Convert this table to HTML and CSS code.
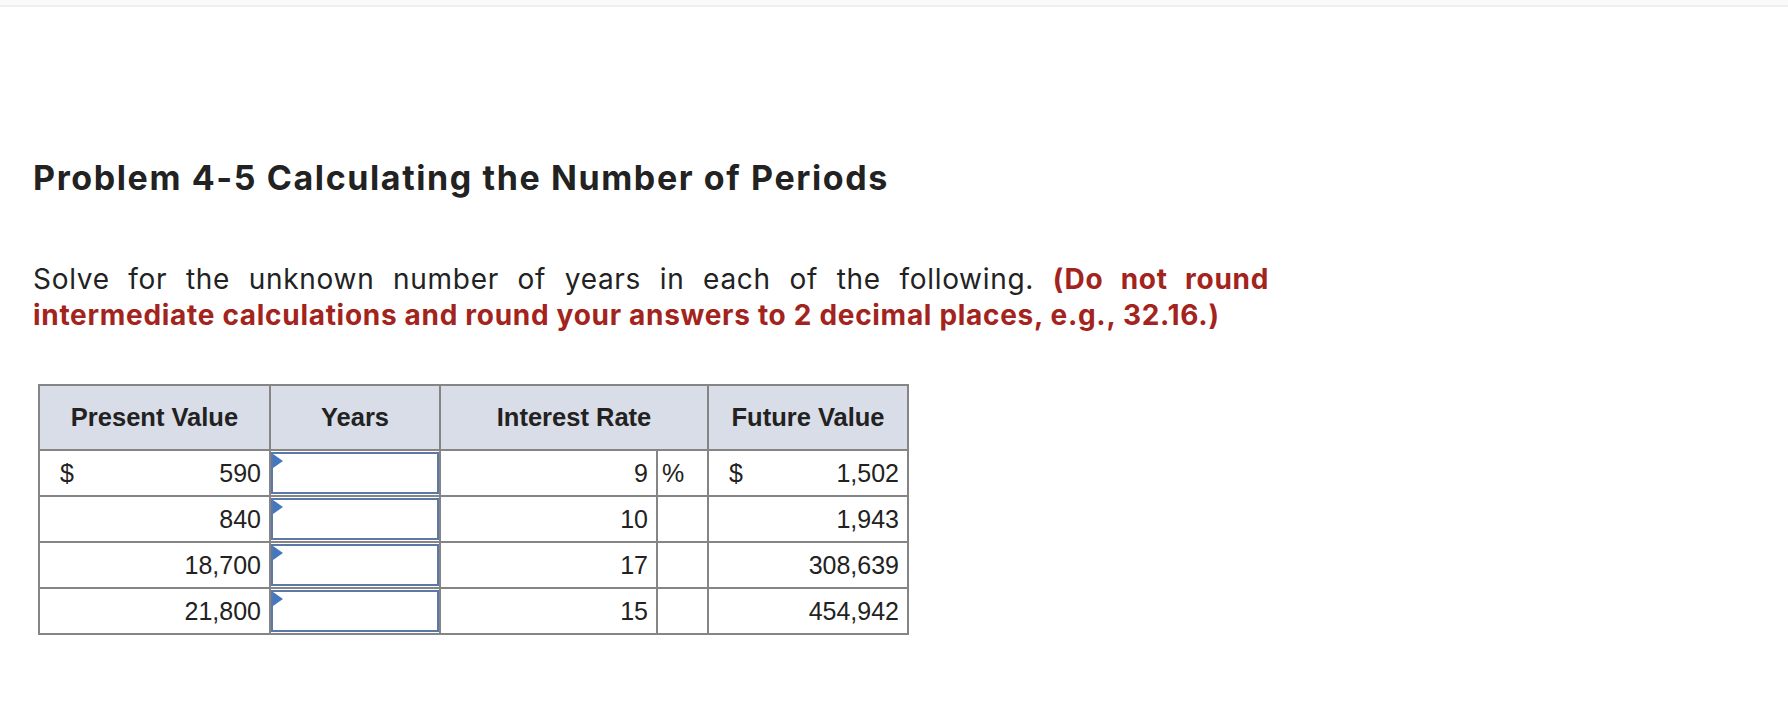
FILE: index.html
```html
<!DOCTYPE html>
<html>
<head>
<meta charset="utf-8">
<link rel="stylesheet" href="styles.css">
</head>
<body>
<div class="topbar"></div>
<main class="content">
  <h1 class="title">Problem 4-5 Calculating the Number of Periods</h1>
  <p class="prompt"><span class="line first">Solve for the unknown number of years in each of the following. <strong class="note">(Do not round</strong></span><span class="line"><strong class="note">intermediate calculations and round your answers to 2 decimal places, e.g., 32.16.)</strong></span></p>
  <table class="grid">
    <colgroup>
      <col class="c-pv"><col class="c-yr"><col class="c-ir"><col class="c-pct"><col class="c-fv">
    </colgroup>
    <thead>
      <tr><th>Present Value</th><th>Years</th><th colspan="2">Interest Rate</th><th>Future Value</th></tr>
    </thead>
    <tbody>
      <tr>
        <td class="money"><span class="cur">$</span><span>590</span></td>
        <td class="inp"><div class="box"><span class="flag"></span></div></td>
        <td class="num">9</td><td class="pct">%</td>
        <td class="money"><span class="cur">$</span><span>1,502</span></td>
      </tr>
      <tr>
        <td class="money"><span class="cur"></span><span>840</span></td>
        <td class="inp"><div class="box"><span class="flag"></span></div></td>
        <td class="num">10</td><td class="pct"></td>
        <td class="money"><span class="cur"></span><span>1,943</span></td>
      </tr>
      <tr>
        <td class="money"><span class="cur"></span><span>18,700</span></td>
        <td class="inp"><div class="box"><span class="flag"></span></div></td>
        <td class="num">17</td><td class="pct"></td>
        <td class="money"><span class="cur"></span><span>308,639</span></td>
      </tr>
      <tr>
        <td class="money"><span class="cur"></span><span>21,800</span></td>
        <td class="inp"><div class="box"><span class="flag"></span></div></td>
        <td class="num">15</td><td class="pct"></td>
        <td class="money"><span class="cur"></span><span>454,942</span></td>
      </tr>
    </tbody>
  </table>
</main>
</body>
</html>
```
FILE: styles.css
```css
html, body {
  margin: 0;
  padding: 0;
  background: #ffffff;
}
.topbar {
  height: 5px;
  background: #fafafa;
  border-bottom: 2px solid #efefef;
}
.content {
  padding: 0 0 0 33px;
  color: #222222;
}
.title {
  font-family: Inter, "Liberation Sans", sans-serif;
  font-weight: 700;
  font-size: 34px;
  letter-spacing: 1.6px;
  line-height: 40px;
  margin: 151px 0 0 0;
  color: #222222;
}
.prompt {
  font-family: Inter, "Liberation Sans", sans-serif;
  font-size: 28px;
  letter-spacing: 0.7px;
  line-height: 36px;
  width: 1236px;
  margin: 63px 0 0 0;
  color: #222222;
}
.line {
  display: block;
  white-space: nowrap;
}
.first {
  text-align: justify;
  text-align-last: justify;
}
.note {
  color: #a3231d;
  font-weight: 700;
}
.grid {
  margin: 51px 0 0 5px;
  border-collapse: collapse;
  table-layout: fixed;
  width: 869px;
  font-family: "Liberation Sans", Arial, sans-serif;
  font-size: 25px;
  color: #222222;
}
.c-pv { width: 231px; }
.c-yr { width: 170px; }
.c-ir { width: 217px; }
.c-pct { width: 51px; }
.c-fv { width: 200px; }
.grid th, .grid td {
  border: 2px solid #858585;
}
.grid th {
  background: #d9dde7;
  font-weight: 700;
  font-size: 25.5px;
  height: 63px;
  padding: 0;
  text-align: center;
}
.grid td {
  height: 43px;
  padding: 0 8px;
}
.money > span:last-child {
  float: right;
}
.money {
  padding-left: 20px !important;
}
.cur {
  display: inline-block;
  min-width: 1px;
}
.num {
  text-align: right;
}
.pct {
  text-align: left;
  padding-left: 4px !important;
}
.inp {
  padding: 1px 0 0 0 !important;
  vertical-align: top;
}
.box {
  position: relative;
  box-sizing: border-box;
  height: 42px;
  border: 2px solid #5b78a6;
  background: #ffffff;
}
.flag {
  position: absolute;
  left: 0;
  top: 0;
  width: 0;
  height: 0;
  border-top: 7px solid transparent;
  border-bottom: 7px solid transparent;
  border-left: 10px solid #4377c0;
}
```
